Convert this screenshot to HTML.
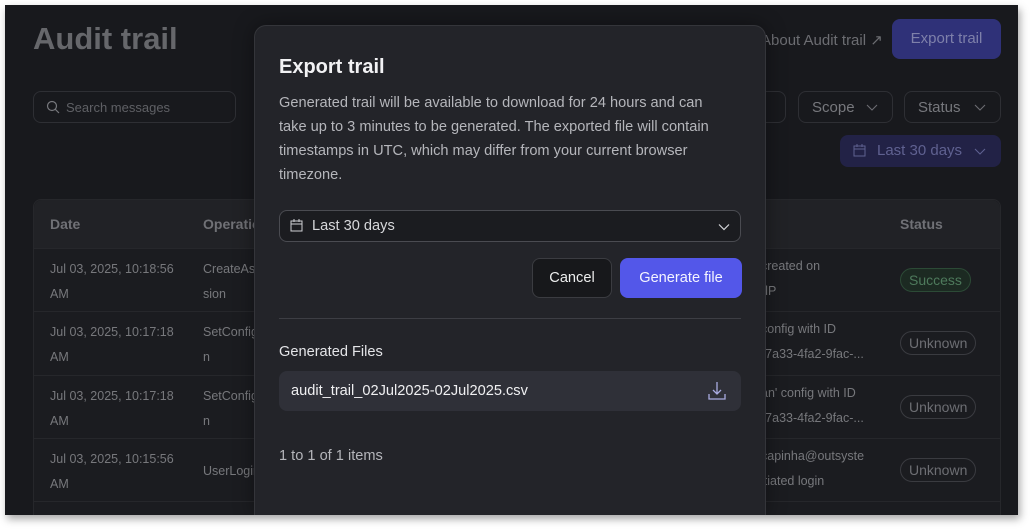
<!DOCTYPE html>
<html><head><meta charset="utf-8"><style>
*{box-sizing:border-box;margin:0;padding:0}
html,body{width:1034px;height:531px;overflow:hidden}
body{background:#fff;font-family:"Liberation Sans",sans-serif;position:relative}
.frame{position:absolute;left:5px;top:5px;width:1013px;height:510px;background:#18191d;overflow:hidden;box-shadow:2px 4px 8px rgba(0,0,0,.35)}
.a{position:absolute}
.box{position:absolute;border:1px solid #2e2f34;border-radius:8px;color:#77787d;font-size:15px;display:flex;align-items:center}
.row{position:absolute;left:28px;width:967px;border-top:1px solid #26272b;height:64px;font-size:12.5px;color:#77787c}
.row .d{position:absolute;left:17px;top:8px;line-height:25px}
.row .o{position:absolute;left:170px;top:8px;line-height:25px}
.row .m{position:absolute;left:728px;top:5px;line-height:25px}
.badge{position:absolute;left:867px;top:19px;height:24px;border:1px solid #3a3b40;border-radius:12px;padding:0 8px;font-size:14px;line-height:22px;color:#6d6e73}
.modal{position:absolute;left:249px;top:20px;width:512px;height:490px;background:#232429;border:1px solid #34353a;border-bottom:none;border-radius:12px 12px 0 0;box-shadow:0 0 20px rgba(0,0,0,.4)}
.modal *{position:absolute}
.chev{position:absolute}
</style></head><body>
<div class="frame">
  <div class="a" style="left:28px;top:16px;font-size:31px;font-weight:bold;color:#66676b">Audit trail</div>
  <div class="a" style="left:756px;top:26px;font-size:15px;color:#6c6d72">About Audit trail ↗</div>
  <div class="a" style="left:887px;top:14px;width:109px;height:40px;background:#2f3178;border-radius:8px;color:#7e80aa;font-size:15px;text-align:center;line-height:40px">Export trail</div>
  <div class="box" style="left:28px;top:86px;width:203px;height:32px;padding-left:12px;font-size:13px;color:#5f6065"><svg width="14" height="14" viewBox="0 0 14 14" style="margin-right:6px"><circle cx="6" cy="6" r="4.5" fill="none" stroke="#77787d" stroke-width="1.2"/><path d="M9.3 9.3L13 13" stroke="#77787d" stroke-width="1.2"/></svg>Search messages</div>
  <div class="box" style="left:700px;top:86px;width:81px;height:32px"></div>
  <div class="box" style="left:793px;top:86px;width:95px;height:32px;padding-left:13px">Scope</div>
  <svg class="chev" style="left:861px;top:99px" width="12" height="7" viewBox="0 0 12 7"><path d="M1 1l5 5 5-5" fill="none" stroke="#6c6d72" stroke-width="1.1"/></svg>
  <div class="box" style="left:899px;top:86px;width:97px;height:32px;padding-left:13px">Status</div>
  <svg class="chev" style="left:969px;top:99px" width="12" height="7" viewBox="0 0 12 7"><path d="M1 1l5 5 5-5" fill="none" stroke="#6c6d72" stroke-width="1.1"/></svg>
  <div class="a" style="left:835px;top:130px;width:161px;height:32px;background:#222246;border-radius:8px;color:#5f6190;font-size:15px;line-height:32px;padding-left:37px">Last 30 days</div>
  <svg class="a" style="left:848px;top:139px" width="13" height="13" viewBox="0 0 13 13"><rect x="1" y="2" width="11" height="10" fill="none" stroke="#5f6190"/><path d="M1 5h11M4 0v3M9 0v3" stroke="#5f6190"/></svg>
  <svg class="chev" style="left:969px;top:143px" width="12" height="7" viewBox="0 0 12 7"><path d="M1 1l5 5 5-5" fill="none" stroke="#5f6190" stroke-width="1.1"/></svg>
  <div class="a" style="left:28px;top:194px;width:968px;height:330px;border:1px solid #26272b;border-radius:8px;background:#1b1c20"></div>
  <div class="a" style="left:29px;top:195px;width:966px;height:48px;background:#212226;border-radius:8px 8px 0 0"></div>
  <div class="a" style="left:45px;top:211px;font-size:14px;font-weight:bold;color:#707176">Date</div>
  <div class="a" style="left:198px;top:211px;font-size:14px;font-weight:bold;color:#707176">Operation</div>
  <div class="a" style="left:895px;top:211px;font-size:14px;font-weight:bold;color:#707176">Status</div>
  <div class="row" style="top:243px"><div class="d">Jul 03, 2025, 10:18:56<br>AM</div><div class="o">CreateAs<br>sion</div><div class="m">created on<br>dP</div><div class="badge" style="color:#4e7a5c;border-color:#2c4a36;background:#1c2a22">Success</div></div>
  <div class="row" style="top:306px"><div class="d">Jul 03, 2025, 10:17:18<br>AM</div><div class="o">SetConfig<br>n</div><div class="m">config with ID<br>-7a33-4fa2-9fac-...</div><div class="badge">Unknown</div></div>
  <div class="row" style="top:370px"><div class="d">Jul 03, 2025, 10:17:18<br>AM</div><div class="o">SetConfig<br>n</div><div class="m">an' config with ID<br>-7a33-4fa2-9fac-...</div><div class="badge">Unknown</div></div>
  <div class="row" style="top:433px"><div class="d">Jul 03, 2025, 10:15:56<br>AM</div><div class="o" style="top:20px">UserLogin</div><div class="m">capinha@outsyste<br>itiated login</div><div class="badge">Unknown</div></div>
  <div class="row" style="top:496px;height:14px"></div>
  <div class="modal">
    <div style="left:24px;top:30px;font-size:20px;font-weight:bold;color:#f2f2f4">Export trail</div>
    <div style="left:24px;top:65px;width:448px;font-size:14.6px;line-height:24px;color:#b5b6bb">Generated trail will be available to download for 24 hours and can take up to 3 minutes to be generated. The exported file will contain timestamps in UTC, which may differ from your current browser timezone.</div>
    <div style="left:24px;top:184px;width:462px;height:32px;background:#1b1c20;border:1px solid #4a4b51;border-radius:8px;color:#d6d7da;font-size:14.6px;line-height:30px;padding-left:32px">Last 30 days</div>
    <svg style="left:35px;top:193px" width="13" height="13" viewBox="0 0 13 13"><rect x="1" y="2" width="11" height="10" fill="none" stroke="#cfd0d4"/><path d="M1 5h11M4 0v3M9 0v3" stroke="#cfd0d4"/></svg>
    <svg style="left:463px;top:197px" width="12" height="8" viewBox="0 0 12 8"><path d="M1 1.5l5 5 5-5" fill="none" stroke="#d6d7da" stroke-width="1.2"/></svg>
    <div style="left:277px;top:232px;width:80px;height:40px;background:#17181b;border:1px solid #3b3c41;border-radius:8px;color:#eceded;font-size:14.6px;text-align:center;line-height:38px">Cancel</div>
    <div style="left:365px;top:232px;width:122px;height:40px;background:#5357e9;border-radius:8px;color:#f4f4ff;font-size:14.6px;text-align:center;line-height:40px">Generate file</div>
    <div style="left:24px;top:292px;width:462px;height:1px;background:#3d3e44"></div>
    <div style="left:24px;top:318px;font-size:14.6px;color:#e4e5e8">Generated Files</div>
    <div style="left:24px;top:345px;width:462px;height:40px;background:#2f3038;border-radius:8px;color:#f0f0f2;font-size:14.6px;line-height:40px;padding-left:12px">audit_trail_02Jul2025-02Jul2025.csv</div>
    <svg style="left:452px;top:355px" width="20" height="20" viewBox="0 0 20 20"><path d="M10 1v12M6 9l4 4 4-4M2 13v5h16v-5" fill="none" stroke="#a9abe0" stroke-width="1.3"/></svg>
    <div style="left:24px;top:422px;font-size:14.6px;color:#b5b6bb">1 to 1 of 1 items</div>
  </div>
</div>
</body></html>
